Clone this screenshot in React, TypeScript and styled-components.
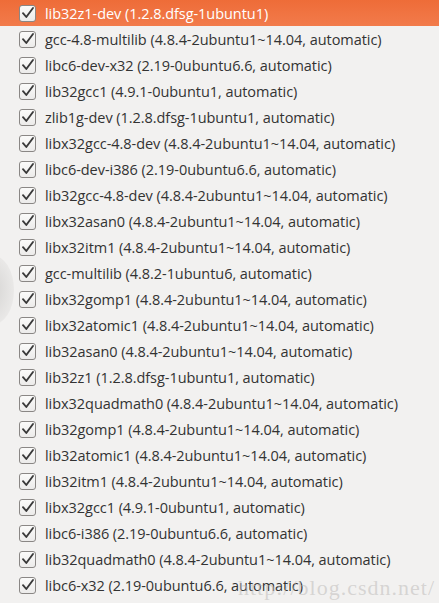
import * as React from 'react'
import styled, { createGlobalStyle } from 'styled-components';

const GlobalStyle = createGlobalStyle`
  html, body {
    margin: 0;
    padding: 0;
    background: #f2f1f0;
  }
`;

const packages: string[] = [
  'lib32z1-dev (1.2.8.dfsg-1ubuntu1)',
  'gcc-4.8-multilib (4.8.4-2ubuntu1~14.04, automatic)',
  'libc6-dev-x32 (2.19-0ubuntu6.6, automatic)',
  'lib32gcc1 (4.9.1-0ubuntu1, automatic)',
  'zlib1g-dev (1.2.8.dfsg-1ubuntu1, automatic)',
  'libx32gcc-4.8-dev (4.8.4-2ubuntu1~14.04, automatic)',
  'libc6-dev-i386 (2.19-0ubuntu6.6, automatic)',
  'lib32gcc-4.8-dev (4.8.4-2ubuntu1~14.04, automatic)',
  'libx32asan0 (4.8.4-2ubuntu1~14.04, automatic)',
  'libx32itm1 (4.8.4-2ubuntu1~14.04, automatic)',
  'gcc-multilib (4.8.2-1ubuntu6, automatic)',
  'libx32gomp1 (4.8.4-2ubuntu1~14.04, automatic)',
  'libx32atomic1 (4.8.4-2ubuntu1~14.04, automatic)',
  'lib32asan0 (4.8.4-2ubuntu1~14.04, automatic)',
  'lib32z1 (1.2.8.dfsg-1ubuntu1, automatic)',
  'libx32quadmath0 (4.8.4-2ubuntu1~14.04, automatic)',
  'lib32gomp1 (4.8.4-2ubuntu1~14.04, automatic)',
  'lib32atomic1 (4.8.4-2ubuntu1~14.04, automatic)',
  'lib32itm1 (4.8.4-2ubuntu1~14.04, automatic)',
  'libx32gcc1 (4.9.1-0ubuntu1, automatic)',
  'libc6-i386 (2.19-0ubuntu6.6, automatic)',
  'lib32quadmath0 (4.8.4-2ubuntu1~14.04, automatic)',
  'libc6-x32 (2.19-0ubuntu6.6, automatic)',
];

const Panel = styled.div`
  position: relative;
  width: 439px;
  height: 603px;
  overflow: hidden;
  background: #f2f1f0;
  font-family: "Open Sans", "DejaVu Sans", sans-serif;
`;

const List = styled.div`
  display: flex;
  flex-direction: column;
`;

const Row = styled.div<{ selected?: boolean }>`
  display: flex;
  align-items: center;
  gap: 9px;
  height: 26px;
  padding-left: 19px;
  background: ${p => p.selected ? 'linear-gradient(#ee6c38, #f27b4b)' : 'transparent'};
  color: ${p => p.selected ? '#ffffff' : '#333333'};
  font-size: 14.5px;
  letter-spacing: -0.05px;
  white-space: nowrap;
`;

const Box = styled.div`
  flex: none;
  width: 15px;
  height: 15px;
  border: 1px solid #8a8785;
  border-radius: 3px;
  background: linear-gradient(#fbfbfa, #ecebea);
  display: flex;
  align-items: center;
  justify-content: center;
`;

const Shade = styled.div`
  position: absolute;
  left: -30px;
  top: 255px;
  width: 44px;
  height: 70px;
  border-radius: 50%;
  background: radial-gradient(rgba(160, 158, 156, 0.35), rgba(160, 158, 156, 0));
`;

const Watermark = styled.div`
  position: absolute;
  right: 4px;
  bottom: 2px;
  font-family: "Liberation Serif", serif;
  font-size: 22px;
  color: rgba(190, 188, 186, 0.55);
  letter-spacing: 1px;
  pointer-events: none;
`;

function Check() {
  return (
    <Box>
      <svg width="14" height="14" viewBox="0 0 14 14">
        <path d="M2 7.2 L5.3 11 L12 2" fill="none" stroke="#3a3a3a" strokeWidth="1.9" strokeLinecap="round" strokeLinejoin="round" />
      </svg>
    </Box>
  )
}

export default function App() {
  return (
    <Panel>
      <GlobalStyle />
      <Shade />
      <List>
        {packages.map((name, i) => (
          <Row key={name} selected={i === 0}>
            <Check />
            <span>{name}</span>
          </Row>
        ))}
      </List>
      <Watermark>http://blog.csdn.net/</Watermark>
    </Panel>
  )
}
